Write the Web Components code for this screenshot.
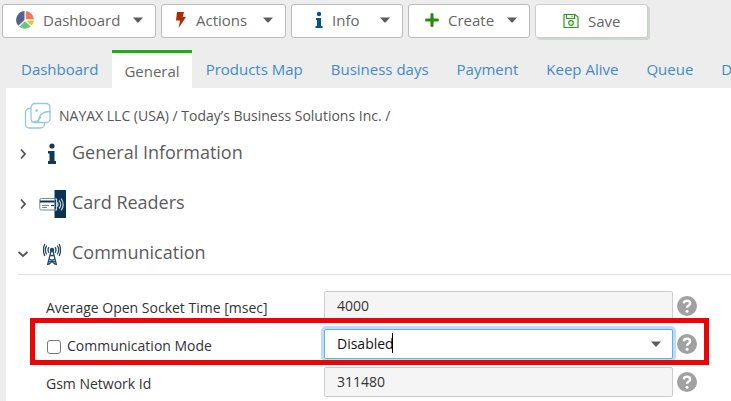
<!DOCTYPE html>
<html lang="en">
<head>
<meta charset="utf-8">
<title>Machine settings</title>
<style>
body{margin:0;background:#ededed;font-family:"Open Sans","Noto Sans",sans-serif;font-size:15px;color:#333;overflow:hidden}
</style>
</head>
<body>
<machine-page></machine-page>
<script>
const icons = {
pie:`<svg width="18" height="18" viewBox="0 0 18 18"><path fill="#55628a" d="M8.5 0A9 9 0 0 0 2.2 14.7L8.5 9z"/><path fill="#f37858" d="M9.8 0v8.3H18A9 9 0 0 0 9.8 0z"/><path fill="#f3c51c" d="M10.5 9.8H18a9 9 0 0 1-2.4 5z"/><path fill="#70c284" d="M9 10.3l5.8 5.3A9 9 0 0 1 3.2 15.7z"/></svg>`,
bolt:`<svg width="12" height="18" viewBox="0 0 12 18"><path fill="#ac2b06" d="M2 1h7L7.7 6H11L3.7 17 5 9.5H1z"/></svg>`,
info:`<svg width="8" height="18" viewBox="0 0 8 18"><g fill="#075383"><circle cx="4" cy="3" r="2.2"/><path d="M1 7h5v8h1.5v2H.5v-2H2V9H1z"/></g></svg>`,
plus:`<svg width="14" height="14" viewBox="0 0 14 14"><path stroke="#2b8c0c" stroke-width="3.2" stroke-linecap="round" d="M7 1.6v10.8M1.6 7h10.8"/></svg>`,
save:`<svg width="16" height="16" viewBox="0 0 16 16" fill="none" stroke="#2a9c1c" stroke-width="1.2"><path d="M1 1.5h11L15 4v10.5H1zM3.5 1.5v4h8v-4M9 2.5v1.5"/><circle cx="8" cy="10" r="2.3"/></svg>`,
crumb:`<svg width="28" height="28" viewBox="0 0 28 28" fill="none" stroke="#93c5e8" stroke-width="1.3"><rect x="7" y="1.5" width="19" height="19" rx="4"/><path d="M7 6.5H5.5A4 4 0 0 0 1.5 10.5V22a4 4 0 0 0 4 4H16.500a4 4 0 0 0 4-4v-1.500M14.500 20.500c0-7 4-11 11.500-11M7 19.500c4 2 7-.5 10-4.500"/><circle cx="12.500" cy="8.500" r=".7" fill="#93c5e8"/></svg>`,
infoDark:`<svg width="10" height="22" viewBox="0 0 10 22"><g fill="#12395a"><circle cx="5" cy="3" r="2.600"/><path d="M1 8h6.500v10H9v3H1v-3h1.500v-7.500H1z"/></g></svg>`,
card:`<svg width="27" height="28" viewBox="0 0 27 28"><path fill="#0a3353" d="M15.500 0H27v28H15.500z"/><g fill="none"><rect x=".8" y="8.500" width="18" height="11.500" rx="1.500" stroke="#6f8797" fill="#fff"/><path stroke="#0a3353" stroke-width="2" d="M1 11.500h14.500"/><path stroke="#6f8797" d="M3 15.500h7M3 17.500h5"/><path stroke="#0a3353" d="M12 15.500h3"/><path fill="#0a3353" d="M15.500 8h4v13h-4z"/><path stroke="#c5d2dc" stroke-width="1.200" d="M15.500 9h2v11h-2M18 12.500q2 2 0 4M20 10.500q3.500 4 0 8M22 8.500q4.500 6 0 12"/></g></svg>`,
tower:`<svg width="18" height="23" viewBox="0 0 18 23" fill="none" stroke="#244866" stroke-width="1.300"><path d="M8.300 7L4.500 22M9.700 7l3.800 15M7.300 12.500h3.400M6.500 16l5.500 3M11.500 16L6 19M5.500 21.500L9 18.500l3.500 3"/><circle cx="9" cy="7" r="1.600" fill="#244866"/><path d="M6 4.200q-2 2.800 0 5.600M12 4.200q2 2.800 0 5.600M3.800 2.600q-3 4.400 0 8.800M14.200 2.600q3 4.400 0 8.800M1.900 1q-3 6 0 12M16.100 1q3 6 0 12"/></svg>`,
help:`<svg width="20" height="20" viewBox="0 0 20 20"><circle cx="10" cy="10" r="10" fill="#a1a1a1"/><path d="M6.800 7.300Q7 4.700 10 4.700q3.100 0 3.100 2.500 0 1.600-1.700 2.500-1.400.8-1.400 2.100" fill="none" stroke="#fff" stroke-width="2.400"/><circle cx="10" cy="15.200" r="1.500" fill="#fff"/></svg>`,
caret:`<svg width="10" height="6" viewBox="0 0 10 6"><path fill="#5c5c5c" d="M0 .5h10L5.500 5.500h-1z"/></svg>`,
chevron:`<svg width="10" height="12" viewBox="0 0 10 12"><path d="M3 1.500L7 6l-4 4.500" fill="none" stroke="#555" stroke-width="1.800"/></svg>`
};
function define(name, render){
  customElements.define(name, class extends HTMLElement{
    connectedCallback(){
      if(!this.shadowRoot) this.attachShadow({mode:"open"}).innerHTML = render(this);
    }
  });
}
define("tool-button", el => `<style>
:host{display:block;flex:none;width:var(--w)}
button{box-sizing:border-box;width:100%;height:34px;display:flex;align-items:center;gap:9px;padding:0 12px 2px 13px;font:inherit;color:#666;background:#fff;border:1px solid #bbb;border-radius:3px}
.inset{padding-left:23px}
.create{padding-left:16px}
.save{padding:0 0 0 27px;border-color:#ccc;box-shadow:2px 2px 0 #cfd8cf}
.label{flex:1;text-align:left;white-space:nowrap}
svg{display:block}
</style><button type="button" class="${el.getAttribute("kind")||""}">${icons[el.getAttribute("icon")]}<span class="label"><slot></slot></span>${el.hasAttribute("menu")?icons.caret:""}</button>`);

define("tab-link", el => `<style>
:host{display:block;flex:none}
a{box-sizing:border-box;display:block;height:38px;line-height:34px;padding:2px 14px 0;color:#428bca;text-decoration:none;white-space:nowrap}
:host([active]) a{background:#fff;color:#666;border-top:3px solid #19b40b;padding:1px 12px 0}
</style><a href="#"${el.hasAttribute("active")?' aria-current="page"':""}><slot></slot></a>`);

define("section-head", el => `<style>
:host{display:block}
h2{margin:0;font-weight:400;font-size:18px;color:#5c5c5c}
button{width:100%;height:40px;display:grid;grid-template-columns:14px 36px 1fr;column-gap:2px;align-items:center;padding:0 0 0 12px;border:0;background:none;font:inherit;color:inherit;text-align:left}
.icon{display:flex;justify-content:center}
.label{padding-bottom:4px}
svg{display:block}
:host([open]) .chev{transform:rotate(90deg)}
.chev{width:10px;height:12px}
</style><h2><button type="button" aria-expanded="${el.hasAttribute("open")}"><span class="chev">${icons.chevron}</span><span class="icon">${icons[el.getAttribute("icon")]}</span><span class="label"><slot></slot></span></button></h2>`);

define("field-row", el => {
  const select = el.hasAttribute("select"), v = el.getAttribute("value");
  return `<style>
:host{display:block;position:relative}
.row{display:grid;grid-template-columns:274px 1fr 20px;align-items:center;column-gap:4px;height:30px;padding:0 34px 0 40px}
.name{display:flex;align-items:center;gap:6px;padding-top:2px;font-size:14px;white-space:nowrap}
.name input{appearance:none;box-sizing:border-box;width:14px;height:14px;margin:4px 0 0 1px;border:1px solid #777;border-radius:3px;background:#fff}
.control{position:relative}
.field{box-sizing:border-box;display:block;width:100%;height:30px;margin:0;padding:0 12px 2px;font:inherit;font-size:14px;color:#333;background:#f5f5f5;border:1px solid #ccc;border-radius:2px;outline:0}
select.field{appearance:none;background:#fff;border-color:#66afe9;box-shadow:0 0 0 3px #bcdcfc;color:#111}
.control svg{position:absolute;right:12px;top:12px}
.cursor{position:absolute;left:68px;top:4px;width:1px;height:20px;background:#000}
.help{width:20px;height:20px;padding:0;border:0;background:none}
.help svg{display:block}
.mark{position:absolute;inset:-11px 22px -6px 24px;border:5px solid #ea0606;pointer-events:none}
</style><div class="row"><div class="name">${select?'<input type="checkbox" id="on"><label for="on">':'<label for="f">'}<slot></slot></label></div>
<div class="control">${select?`<select class="field" aria-label="Communication Mode"><option>${v}</option></select><span class="cursor"></span>${icons.caret}`:`<input class="field" id="f" value="${v}">`}</div>
<button class="help" type="button" aria-label="Help">${icons.help}</button></div>${select?'<div class="mark"></div>':""}`;
});

define("machine-page", () => `<style>
:host{display:block}
.tools{display:flex;gap:5px;padding:4px 2px 0}
.tabs{display:flex;padding:12px 0 0 7px;overflow:hidden}
main{display:block;margin-left:6px;background:#fff;padding-top:14px;min-height:calc(100vh - 102px)}
.crumb{display:flex;align-items:center;gap:7px;padding-left:18px;height:28px;font-size:14px;color:#555}
.crumb svg{display:block}
.crumb span{padding-bottom:2px}
.heads{display:grid;gap:10px;padding-top:4px}
.fields{display:grid;gap:8px;border-top:1px solid #ddd;padding:16px 0 4px;margin-left:12px}
.fields field-row{margin-left:-12px}
</style>
<div class="tools">
<tool-button icon="pie" menu style="--w:154px">Dashboard</tool-button>
<tool-button icon="bolt" kind="bolt" menu style="--w:125px">Actions</tool-button>
<tool-button icon="info" kind="inset" menu style="--w:112px">Info</tool-button>
<tool-button icon="plus" kind="create" menu style="--w:122px">Create</tool-button>
<tool-button icon="save" kind="save" style="--w:113px">Save</tool-button>
</div>
<nav class="tabs"><tab-link>Dashboard</tab-link><tab-link active>General</tab-link><tab-link>Products Map</tab-link><tab-link>Business days</tab-link><tab-link>Payment</tab-link><tab-link>Keep Alive</tab-link><tab-link>Queue</tab-link><tab-link>D</tab-link></nav>
<main>
<div class="crumb">${icons.crumb}<span>NAYAX LLC (USA) / Today’s Business Solutions Inc. /</span></div>
<div class="heads"><section-head icon="infoDark">General Information</section-head><section-head icon="card">Card Readers</section-head><section-head icon="tower" open>Communication</section-head></div>
<div class="fields"><field-row value="4000">Average Open Socket Time [msec]</field-row><field-row select value="Disabled">Communication Mode</field-row><field-row value="311480">Gsm Network Id</field-row></div>
</main>`);
</script>
</body>
</html>
